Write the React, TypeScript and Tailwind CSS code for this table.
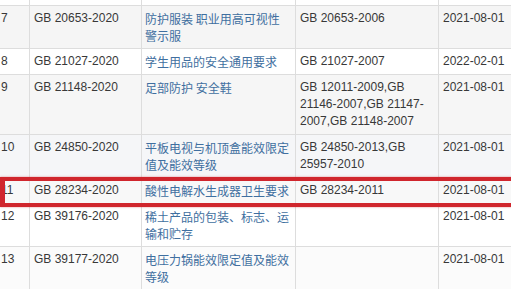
const rows = [
  {
    no: '7',
    code: 'GB 20653-2020',
    title: ['防护服装 职业用高可视性', '警示服'],
    old: ['GB 20653-2006'],
    date: '2021-08-01',
    bg: 'bg-[#f5f5f5]',
  },
  {
    no: '8',
    code: 'GB 21027-2020',
    title: ['学生用品的安全通用要求'],
    old: ['GB 21027-2007'],
    date: '2022-02-01',
    bg: 'bg-white',
  },
  {
    no: '9',
    code: 'GB 21148-2020',
    title: ['足部防护 安全鞋'],
    old: ['GB 12011-2009,GB', '21146-2007,GB 21147-', '2007,GB 21148-2007'],
    date: '2021-08-01',
    bg: 'bg-[#f6f6f6]',
  },
  {
    no: '10',
    code: 'GB 24850-2020',
    title: ['平板电视与机顶盒能效限定', '值及能效等级'],
    old: ['GB 24850-2013,GB', '25957-2010'],
    date: '2021-08-01',
    bg: 'bg-[#f5f6f8]',
  },
  {
    no: '11',
    code: 'GB 28234-2020',
    title: ['酸性电解水生成器卫生要求'],
    old: ['GB 28234-2011'],
    date: '2021-08-01',
    bg: 'bg-[#f8f8f8]',
  },
  {
    no: '12',
    code: 'GB 39176-2020',
    title: ['稀土产品的包装、标志、运', '输和贮存'],
    old: [],
    date: '2021-08-01',
    bg: 'bg-white',
  },
  {
    no: '13',
    code: 'GB 39177-2020',
    title: ['电压力锅能效限定值及能效', '等级'],
    old: [],
    date: '2021-08-01',
    bg: 'bg-[#fbfbfb]',
  },
];

function Lines({ lines }: { lines: string[] }) {
  return (
    <>
      {lines.map((l, i) => (
        <div key={i} className="whitespace-nowrap">
          {l}
        </div>
      ))}
    </>
  );
}

export default function App() {
  return (
    <div className="relative w-[511px] h-[289px] overflow-hidden bg-white font-['Liberation_Sans','Noto_Sans_CJK_SC',sans-serif] text-[12px] leading-[17px] text-[#383838]">
      {/* row cut off above */}
      <div className="flex h-[6px] border-b border-[#dddddd] bg-white">
        <div className="w-[30px] shrink-0 border-r border-[#dddddd]" />
        <div className="w-[112px] shrink-0 border-r border-[#dddddd]" />
        <div className="w-[154px] shrink-0 border-r border-[#dddddd]" />
        <div className="w-[143px] shrink-0 border-r border-[#dddddd]" />
        <div className="flex-1" />
      </div>

      {rows.map((r) => (
        <div key={r.no} className={`flex border-b border-[#dddddd] ${r.bg}`}>
          <div className="w-[30px] shrink-0 border-r border-[#dddddd] pl-[1px] py-[4px]">{r.no}</div>
          <div className="w-[112px] shrink-0 border-r border-[#dddddd] pl-[4px] py-[4px]">{r.code}</div>
          <div className="w-[154px] shrink-0 border-r border-[#dddddd] pl-[3px] py-[4px] text-[#3f6fa0] font-['Noto_Sans_CJK_SC',sans-serif]">
            <Lines lines={r.title} />
          </div>
          <div className="w-[143px] shrink-0 border-r border-[#dddddd] pl-[4px] py-[4px]">
            <Lines lines={r.old} />
          </div>
          <div className="flex-1 pl-[4px] py-[4px]">{r.date}</div>
        </div>
      ))}

      {/* red highlight around row 11 */}
      <div className="absolute left-0 top-[177px] h-[30px] w-[540px] border-[4px] border-l-[5px] border-[#d0262d] shadow-[0_0_2px_rgba(208,38,45,0.5)]" />
    </div>
  );
}
